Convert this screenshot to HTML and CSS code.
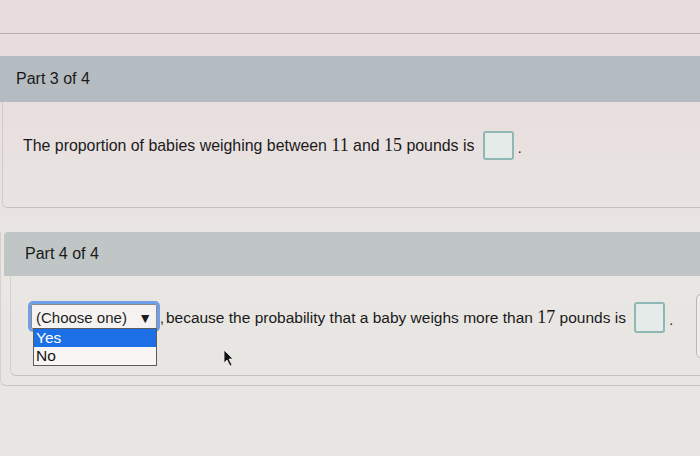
FILE: index.html
```html
<!DOCTYPE html>
<html>
<head>
<meta charset="utf-8">
<link rel="stylesheet" href="styles.css">
</head>
<body>
<div class="page">
  <div class="top"></div>
  <section class="part3">
    <div class="head head3">Part 3 of 4</div>
    <div class="body3">
      <p class="line">The proportion of babies weighing between <span class="num">11</span> and <span class="num">15</span> pounds is <span class="ans"></span><span class="dot">.</span></p>
    </div>
  </section>
  <section class="part4">
    <div class="head head4">Part 4 of 4</div>
    <div class="inner">
      <div class="row">
        <div class="selwrap">
          <div class="select"><span>(Choose one)</span><span class="arrow">&#9660;</span></div>
          <ul class="menu">
            <li class="opt sel">Yes</li>
            <li class="opt">No</li>
          </ul>
        </div>
        <span class="comma">,</span>
        <p class="line l2">because the probability that a baby weighs more than <span class="num">17</span> pounds is <span class="ans ans2"></span><span class="dot">.</span></p>
      </div>
      <div class="edge"></div>
      <svg class="cursor" width="12" height="18" viewBox="0 0 12 18"><path d="M1 1 L1 14 L4 11 L7 17 L9 16 L6 10 L10 10 Z" fill="#111" stroke="#eee" stroke-width="0.8"/></svg>
    </div>
  </section>
</div>
</body>
</html>
```
FILE: styles.css
```css
html, body {
  margin: 0;
  padding: 0;
}
body {
  width: 700px;
  height: 456px;
  overflow: hidden;
  background: linear-gradient(180deg, #e9dcdc 0px, #e8e0df 120px, #e9e6e3 260px, #e7e6e2 456px);
  font-family: "Liberation Sans", Arial, sans-serif;
  color: #1a1a1a;
}
.page {
  display: flex;
  flex-direction: column;
}
.top {
  height: 33px;
  border-bottom: 1.5px solid #b3adad;
}
.part3 {
  margin-top: 22px;
  display: flex;
  flex-direction: column;
}
.head {
  display: flex;
  align-items: center;
  font-size: 16px;
}
.head3 {
  height: 46px;
  padding-left: 16px;
  background: #b5bcc1;
}
.body3 {
  height: 106px;
  margin-left: 2px;
  border-left: 1px solid #d0cccc;
  border-bottom: 1.5px solid #c3bfbe;
  border-bottom-left-radius: 5px;
  box-sizing: border-box;
  padding: 29px 0 0 20px;
}
.line {
  margin: 0;
  font-size: 15.9px;
  display: flex;
  align-items: center;
  white-space: pre;
}
.num {
  font-family: "Liberation Serif", "Times New Roman", serif;
  font-size: 18px;
}
.ans {
  display: inline-block;
  width: 27px;
  height: 25px;
  border: 2px solid #8fb7b3;
  border-radius: 3px;
  background: #e4ebe8;
  margin-left: 4px;
}
.ans2 {
  width: 27px;
  height: 27px;
}
.dot {
  margin-left: 4px;
  margin-top: 4px;
  font-size: 14px;
}
.part4 {
  margin-top: 24px;
  height: 154px;
  border-left: 1px solid #d2cfcc;
  border-bottom: 1.5px solid #c6c3c0;
  border-bottom-left-radius: 6px;
  box-sizing: border-box;
  padding-left: 3px;
  display: flex;
  flex-direction: column;
}
.head4 {
  height: 44px;
  padding-left: 21px;
  background: #c0c6c5;
  border-top-left-radius: 4px;
}
.inner {
  position: relative;
  height: 100px;
  margin-left: 6px;
  border-left: 1px solid #d3d0cd;
  border-bottom: 1.5px solid #c4c1be;
  border-bottom-left-radius: 6px;
  box-sizing: border-box;
  padding: 25px 0 0 17px;
}
.row {
  display: flex;
  align-items: flex-start;
}
.selwrap {
  position: relative;
  width: 132px;
}
.select {
  box-sizing: border-box;
  width: 132px;
  height: 31px;
  border: 3px solid #6f9fe6;
  border-radius: 5px;
  box-shadow: inset 0 0 0 1px #8a8a8a;
  background: #f4f3f1;
  display: flex;
  align-items: center;
  justify-content: space-between;
  padding: 2px 5px 0 5px;
  font-size: 15px;
  color: #1e1e1e;
}
.arrow {
  font-size: 14px;
  color: #1b1b1b;
}
.menu {
  position: absolute;
  left: 5px;
  top: 27px;
  width: 124px;
  margin: 0;
  padding: 0;
  list-style: none;
  border: 1px solid #5c5c5c;
  background: #f7f6f4;
  box-sizing: border-box;
}
.opt {
  height: 18px;
  line-height: 18px;
  padding-left: 2px;
  font-size: 15.5px;
  color: #111;
}
.opt.sel {
  background: #1c6fe4;
  color: #fff;
}
.comma {
  font-size: 14px;
  margin: 9px 2px 0 0;
}
.l2 {
  margin-top: 1px;
  font-size: 15.5px;
}
.edge {
  position: absolute;
  right: -8px;
  top: 18px;
  width: 10px;
  height: 62px;
  border: 1.5px solid #b9b6b4;
  border-radius: 5px;
  background: #efeeec;
}
.cursor {
  position: absolute;
  left: 212px;
  top: 73px;
}
```
